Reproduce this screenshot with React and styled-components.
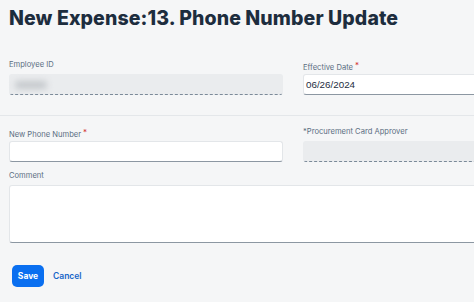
import React from 'react';
import styled, { createGlobalStyle } from 'styled-components';

const GlobalStyle = createGlobalStyle`
  html, body {
    margin: 0;
    padding: 0;
    background: #f5f6f7;
    overflow: hidden;
  }
  body {
    font-family: Inter, "Noto Sans", "Liberation Sans", sans-serif;
  }
`;

const Page = styled.div`
  width: 474px;
  height: 302px;
  overflow: hidden;
  background: #f5f6f7;
`;

const Title = styled.h1`
  margin: 0;
  padding: 6px 0 0 9px;
  height: 36px;
  box-sizing: border-box;
  font-size: 19.5px;
  font-weight: 800;
  color: #1d2d3e;
  letter-spacing: 0.1px;
  white-space: nowrap;
`;

const Section = styled.div`
  display: grid;
  grid-template-columns: 274px 274px;
  column-gap: 20px;
  padding: ${p => p.pad || '0 0 0 9px'};
  width: 577px;
  box-sizing: border-box;
  border-bottom: ${p => (p.divider ? '1px solid #e4e7ea' : 'none')};
`;

const Field = styled.div`
  display: flex;
  flex-direction: column;
  grid-column: ${p => (p.wide ? '1 / span 2' : 'auto')};
`;

const Label = styled.label`
  font-size: 7.6px;
  line-height: 10px;
  color: #5b6e82;
  height: 10px;
  margin-bottom: 4px;
  white-space: nowrap;
`;

const Req = styled.span`
  color: #d32f2f;
  margin-left: 2px;
  vertical-align: 2px;
  font-size: 8px;
`;

const Input = styled.div`
  height: ${p => (p.tall ? '58px' : '21px')};
  box-sizing: border-box;
  border-radius: 3px;
  display: flex;
  align-items: ${p => (p.tall ? 'flex-start' : 'center')};
  padding: 0 2px;
  font-family: "Liberation Sans", Arial, sans-serif;
  font-size: 9.8px;
  color: #1d2d3e;
  background: ${p => (p.readOnly ? '#eaecee' : '#ffffff')};
  border: 1px solid ${p => (p.readOnly ? '#eaecee' : '#e3e6e9')};
  border-bottom: 1px ${p => (p.readOnly ? 'dashed #7b8a99' : 'solid #8c97a2')};
`;

const Redacted = styled.span`
  display: inline-block;
  width: 32px;
  height: 8px;
  margin-left: 3px;
  background: #c4c8cc;
  border-radius: 4px;
  filter: blur(3px);
`;

const Actions = styled.div`
  display: flex;
  align-items: center;
  gap: 9px;
  padding: 22px 0 0 12px;
`;

const SaveButton = styled.button`
  width: 32px;
  height: 22px;
  border: none;
  border-radius: 5px;
  background: #0a6ff0;
  color: #fff;
  font-family: Inter, "Noto Sans", sans-serif;
  font-size: 8.5px;
  font-weight: 700;
  padding: 0;
`;

const CancelButton = styled.button`
  border: none;
  background: none;
  padding: 0;
  color: #1565c8;
  font-family: Inter, "Noto Sans", sans-serif;
  font-size: 8.5px;
  font-weight: 600;
`;

export default function App() {
  return (
    <Page>
      <GlobalStyle />
      <Title>New Expense:13. Phone Number Update</Title>
      <Section divider pad="24px 0 20px 9px">
        <Field>
          <Label>Employee ID</Label>
          <Input readOnly><Redacted /></Input>
        </Field>
        <Field>
          <Label>Effective Date<Req>*</Req></Label>
          <Input>06/26/2024</Input>
        </Field>
      </Section>
      <Section pad="11px 0 0 9px">
        <Field>
          <Label>New Phone Number<Req>*</Req></Label>
          <Input />
        </Field>
        <Field>
          <Label>*Procurement Card Approver</Label>
          <Input readOnly />
        </Field>
      </Section>
      <Section pad="9px 0 0 9px">
        <Field wide>
          <Label>Comment</Label>
          <Input tall />
        </Field>
      </Section>
      <Actions>
        <SaveButton>Save</SaveButton>
        <CancelButton>Cancel</CancelButton>
      </Actions>
    </Page>
  );
}
